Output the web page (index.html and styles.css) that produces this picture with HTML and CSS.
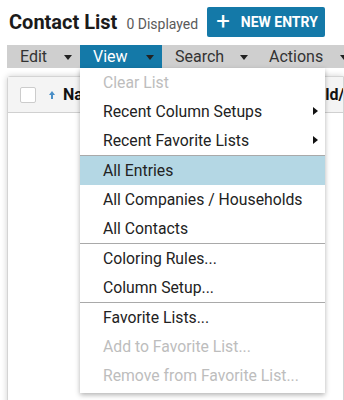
FILE: index.html
```html
<!DOCTYPE html>
<html>
<head>
    <title>Contact List</title>
    <link rel="stylesheet" href="styles.css">
</head>
<body>
    <div class="page-head">
        <h1>Contact List</h1>
        <span class="count">0 Displayed</span>
        <button class="new-entry"><span class="plus">+</span>NEW ENTRY</button>
    </div>
    <div class="menubar">
        <div class="menu-item edit">Edit<span class="caret"></span></div>
        <div class="menu-item view active">View<span class="caret"></span></div>
        <div class="menu-item search">Search<span class="caret"></span></div>
        <div class="menu-item actions">Actions<span class="caret"></span></div>
    </div>
    <div class="grid">
        <div class="grid-head">
            <span class="check"></span>
            <span class="sort-arrow"></span>
            <span class="col name">Name</span>
            <span class="col household">Household/</span>
        </div>
        <div class="grid-body"></div>
    </div>
    <ul class="dropdown">
        <li class="disabled">Clear List</li>
        <li class="sub">Recent Column Setups</li>
        <li class="sub">Recent Favorite Lists</li>
        <li class="sep selected">All Entries</li>
        <li>All Companies / Households</li>
        <li>All Contacts</li>
        <li class="sep">Coloring Rules...</li>
        <li>Column Setup...</li>
        <li class="sep">Favorite Lists...</li>
        <li class="disabled">Add to Favorite List...</li>
        <li class="disabled">Remove from Favorite List...</li>
    </ul>
</body>
</html>
```

FILE: styles.css
```css
body {
    margin: 0;
    font-family: Roboto, "Liberation Sans", sans-serif;
    color: #222222;
    background-color: #ffffff;
    overflow: hidden;
    height: 400px;
}
.page-head {
    display: flex;
    align-items: center;
    height: 30px;
    padding: 7px 0 8px 9px;
}
h1 {
    margin: 0;
    font-size: 20px;
    font-weight: 700;
    color: #1b1b1b;
    flex-shrink: 0;
}
.count {
    margin-left: 9px;
    margin-top: 3px;
    font-size: 14px;
    color: #5a5a5a;
    flex-shrink: 0;
}
.new-entry {
    display: flex;
    align-items: center;
    flex-shrink: 0;
    margin-left: 9px;
    width: 118px;
    height: 30px;
    padding: 0 0 0 9px;
    border: none;
    border-radius: 2px;
    background-color: #1479a8;
    color: #ffffff;
    font-family: Roboto, "Liberation Sans", sans-serif;
    font-size: 14px;
    font-weight: 700;
}
.plus {
    font-size: 24px;
    font-weight: 400;
    margin-right: 11px;
    line-height: 1;
    margin-top: -2px;
}
.menubar {
    display: flex;
    height: 23px;
    margin-left: 7px;
    background-color: #cfcfcf;
}
.menu-item {
    display: flex;
    align-items: center;
    flex-shrink: 0;
    padding: 0 0 0 13px;
    font-size: 16px;
    color: #333333;
}
.menu-item.edit { width: 60px; }
.menu-item.view { width: 69px; }
.menu-item.search { width: 81px; }
.menu-item.actions { width: 80px; }
.menu-item.active {
    background-color: #1479a8;
    color: #ffffff;
}
.caret {
    width: 0;
    height: 0;
    margin-left: auto;
    margin-right: 8px;
    margin-top: 2px;
    border-left: 4px solid transparent;
    border-right: 4px solid transparent;
    border-top: 5px solid #222222;
}
.menu-item.actions .caret {
    margin-right: 0;
    margin-left: 17px;
}
.grid {
    margin: 8px 0 0 7px;
    height: 330px;
    border: 1px solid #d4d4d4;
    border-radius: 3px 0 0 0;
    box-shadow: 0 0 6px rgba(0, 0, 0, 0.18);
}
.grid-head {
    display: flex;
    align-items: center;
    height: 35px;
    overflow: hidden;
    background-color: #f4f4f4;
    border-bottom: 1px solid #d0d0d0;
    font-size: 16px;
    font-weight: 700;
    color: #111111;
    white-space: nowrap;
}
.grid-head > span {
    flex-shrink: 0;
}
.check {
    width: 14px;
    height: 14px;
    margin-left: 12px;
    border: 1px solid #cccccc;
    border-radius: 2px;
    background-color: #ffffff;
}
.sort-arrow {
    position: relative;
    width: 0;
    height: 0;
    margin-left: 13px;
    margin-top: -3px;
    border-left: 3px solid transparent;
    border-right: 3px solid transparent;
    border-bottom: 4px solid #4a8fc7;
}
.sort-arrow::after {
    content: "";
    position: absolute;
    left: -1px;
    top: 4px;
    width: 2px;
    height: 4px;
    background-color: #4a8fc7;
}
.col.name {
    margin-left: 8px;
    width: 198px;
}
.grid-body {
    background-color: #ffffff;
}
.dropdown {
    position: absolute;
    left: 80px;
    top: 68px;
    width: 245px;
    margin: 0;
    padding: 0 0 3px 0;
    list-style: none;
    background-color: #ffffff;
    box-shadow: 0 2px 5px rgba(0, 0, 0, 0.3);
}
.dropdown li {
    position: relative;
    height: 29px;
    line-height: 29px;
    padding-left: 23px;
    font-size: 15.75px;
    color: #222222;
}
.dropdown li.sep {
    border-top: 1px solid #a9a9a9;
}
.dropdown li.selected {
    background-color: #b4d7e4;
}
.dropdown li.disabled {
    color: #bdbdbd;
}
.dropdown li.sub::after {
    content: "";
    position: absolute;
    right: 7px;
    top: 10px;
    border-top: 4px solid transparent;
    border-bottom: 4px solid transparent;
    border-left: 5px solid #111111;
}
```
